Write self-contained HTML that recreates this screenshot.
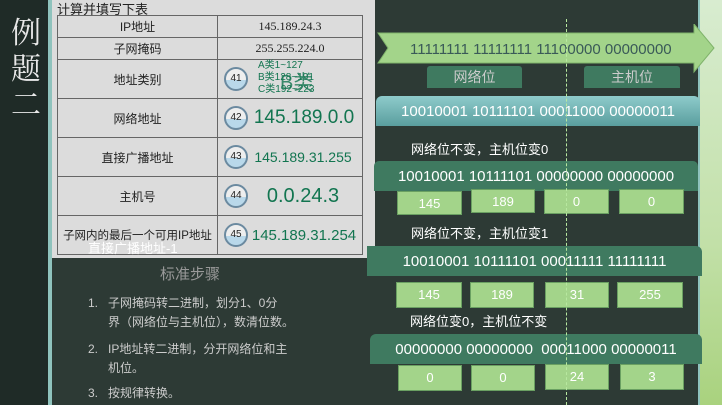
<!DOCTYPE html>
<html><head><meta charset="utf-8"><style>
*{margin:0;padding:0;box-sizing:border-box}
body{width:722px;height:405px;overflow:hidden;position:relative;background:#2d3a35;font-family:"Liberation Sans","Noto Sans CJK SC",sans-serif}
.a{position:absolute}
.left{left:0;top:0;width:48px;height:405px;background:#1f2b27}
.lb{left:48px;top:0;width:4px;height:405px;background:#8fc3bd}
.right{left:698px;top:0;width:24px;height:405px;background:linear-gradient(180deg,#d8ecd0,#c2e0a8 60%,#a9d27e);border-left:2px solid #8fc3bd}
.title{left:6px;top:12px;color:#e8e8e8;font-size:30px;line-height:36px;width:40px;text-align:center;font-family:"Noto Serif CJK SC",serif}
.panel{left:52px;top:0;width:323px;height:258px;background:#dcdcdc}
table{position:absolute;left:57px;top:15px;border-collapse:collapse;font-size:12px;color:#222}
td{border:1px solid #666;text-align:center;height:39px;position:relative}
.c1{width:160px}.c2{width:145px}
.circ{position:absolute;left:6px;top:50%;margin-top:-12px;width:24px;height:24px;border:2px solid #6b8aa0;border-radius:50%;font-size:10px;line-height:20px;text-align:center;background:linear-gradient(#eee 55%,#b9d8ea 55%)}
.g{color:#127550}
.bar{position:absolute;color:#fff;font-size:15px;text-align:center}
.box{position:absolute;background:#a3d48a;border:1px solid #6aa062;color:#fff;font-size:13px;text-align:center;line-height:24px}
.t{position:absolute;color:#fff;font-size:13px}
.step{position:absolute;left:88px;color:#ccc;font-size:12px;line-height:19px}
</style></head><body>
<div class="a left"></div><div class="a lb"></div>
<div class="a title">例<br>题<br>二</div>
<div class="a panel"></div>
<div class="a" style="left:57px;top:-1px;font-size:13px;color:#222">计算并填写下表</div>
<table>
<tr><td class="c1" style="height:22px">IP地址</td><td class="c2" style="height:22px;font-family:'Liberation Serif',serif">145.189.24.3</td></tr>
<tr><td style="height:22px">子网掩码</td><td style="height:22px;font-family:'Liberation Serif',serif">255.255.224.0</td></tr>
<tr><td>地址类别</td><td><div class="circ">41</div><div class="a g" style="left:40px;top:0;font-size:10px;line-height:12px;text-align:left">A类1~127<br>B类128~191<br>C类192~223</div><div class="a g" style="left:62px;top:6px;font-size:20px;opacity:.8">B类</div></td></tr>
<tr><td>网络地址</td><td><div class="circ">42</div><span class="g" style="font-size:19px;margin-left:28px">145.189.0.0</span></td></tr>
<tr><td>直接广播地址</td><td><div class="circ">43</div><span class="g" style="font-size:14px;margin-left:26px">145.189.31.255</span></td></tr>
<tr><td>主机号</td><td><div class="circ">44</div><span class="g" style="font-size:20px;margin-left:26px">0.0.24.3</span></td></tr>
<tr><td style="font-size:11.5px">子网内的最后一个可用IP地址</td><td><div class="circ">45</div><span class="g" style="font-size:15px;margin-left:28px">145.189.31.254</span></td></tr>
</table>
<div class="t" style="left:88px;top:238px">直接广播地址-1</div>
<div class="a" style="left:160px;top:263px;color:#999;font-size:15px">标准步骤</div>
<div class="step" style="top:294px">1.&nbsp;&nbsp; 子网掩码转二进制，划分1、0分<br>&nbsp;&nbsp;&nbsp;&nbsp;&nbsp; 界（网络位与主机位），数清位数。</div>
<div class="step" style="top:340px">2.&nbsp;&nbsp; IP地址转二进制，分开网络位和主<br>&nbsp;&nbsp;&nbsp;&nbsp;&nbsp; 机位。</div>
<div class="step" style="top:384px">3.&nbsp;&nbsp; 按规律转换。</div>
<div class="a right"></div>
<svg class="a" style="left:376px;top:24px" width="340" height="50"><polygon points="2,9 318,9 318,0 338,24 318,48 318,39 2,39 12,24" fill="#a3d48a" stroke="#7fb36a"/><text x="34" y="30" font-size="15" fill="#3a5a58" font-family="Liberation Sans">11111111 11111111 11100000 00000000</text></svg>
<div class="bar" style="left:427px;top:66px;width:95px;height:22px;background:#3f7a60;font-size:14px;line-height:22px;color:#ccc;border-radius:3px 3px 0 0">网络位</div>
<div class="bar" style="left:584px;top:66px;width:96px;height:22px;background:#3f7a60;font-size:14px;line-height:22px;color:#ccc;border-radius:3px 3px 0 0">主机位</div>
<div class="bar" style="left:376px;top:96px;width:324px;height:30px;line-height:32px;background:linear-gradient(#8ecbcb,#5a9e9e);border-radius:6px 6px 0 0">10010001 10111101 00011000 00000011</div>
<div class="t" style="left:411px;top:139px">网络位不变，主机位变0</div>
<div class="bar" style="left:374px;top:161px;width:324px;height:30px;line-height:32px;background:#3f7a60;border-radius:5px 5px 0 0">10010001 10111101 00000000 00000000</div>
<div class="box" style="left:397px;top:191px;width:65px;height:24px">145</div>
<div class="box" style="left:471px;top:189px;width:64px;height:24px">189</div>
<div class="box" style="left:544px;top:189px;width:65px;height:25px">0</div>
<div class="box" style="left:619px;top:189px;width:65px;height:25px">0</div>
<div class="t" style="left:411px;top:223px">网络位不变，主机位变1</div>
<div class="bar" style="left:367px;top:246px;width:335px;height:30px;line-height:32px;background:#3f7a60;border-radius:0 6px 0 0">10010001 10111101 00011111 11111111</div>
<div class="box" style="left:396px;top:282px;width:66px;height:26px">145</div>
<div class="box" style="left:470px;top:282px;width:64px;height:26px">189</div>
<div class="box" style="left:545px;top:282px;width:64px;height:26px">31</div>
<div class="box" style="left:617px;top:282px;width:66px;height:26px">255</div>
<div class="t" style="left:410px;top:311px">网络位变0，主机位不变</div>
<div class="bar" style="left:370px;top:334px;width:332px;height:30px;line-height:32px;background:#3f7a60;border-radius:6px 6px 0 0">00000000 00000000&nbsp; 00011000 00000011</div>
<div class="box" style="left:398px;top:365px;width:64px;height:26px">0</div>
<div class="box" style="left:471px;top:365px;width:64px;height:26px">0</div>
<div class="box" style="left:545px;top:364px;width:64px;height:26px">24</div>
<div class="box" style="left:620px;top:364px;width:64px;height:26px">3</div>
<div class="a" style="left:566px;top:19px;width:0;height:386px;border-left:1px dashed #b8e8a0"></div>
</body></html>
